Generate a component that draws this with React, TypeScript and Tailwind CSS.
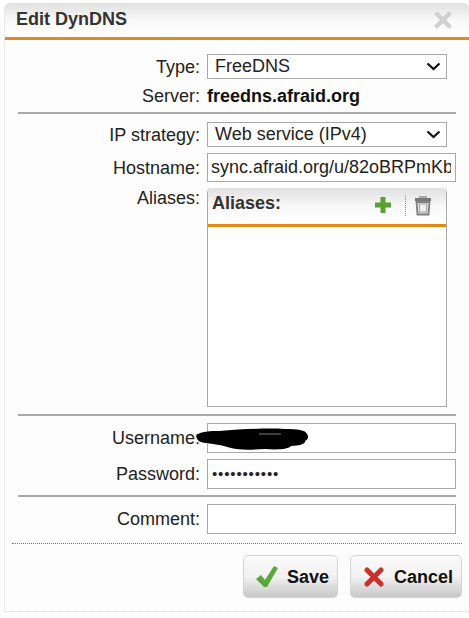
import { ReactNode } from "react";

const font = "font-['Liberation_Sans',Arial,sans-serif]";

function Row({ label, top, children }: { label: ReactNode; top?: boolean; children: ReactNode }) {
  return (
    <div className={`flex ${top ? "items-start" : "items-center"}`}>
      <div className="w-[189px] shrink-0 whitespace-nowrap pr-[7px] text-right text-[18px] leading-[20px] text-[#222]">{label}</div>
      {children}
    </div>
  );
}

function SelectBox({ value }: { value: string }) {
  return (
    <div className="flex h-[25px] w-[240px] items-center justify-between border border-[#a9a9a9] bg-white pl-[7px] pr-[5px] text-[18px] text-[#222]">
      <span>{value}</span>
      <svg width="15" height="9" viewBox="0 0 15 9" fill="none">
        <path d="M1.5 1.5 L7.5 7 L13.5 1.5" stroke="#111" strokeWidth="2.2" />
      </svg>
    </div>
  );
}

function TextBox({ value, className = "h-[30px] pl-[4px]" }: { value?: string; className?: string }) {
  return (
    <div className={`flex w-[249px] items-center border border-[#a9a9a9] bg-white pr-[4px] text-[#222] ${className}`}>
      <span className="min-w-0 overflow-hidden whitespace-nowrap">{value}</span>
    </div>
  );
}

function Divider() {
  return <div className="h-[2px] w-[438px] bg-[#aaaaaa]" />;
}

export default function App() {
  return (
    <div className={`${font} h-[618px] w-[469px] bg-white pl-[4px] pt-[3px]`}>
      <div className="h-[609px] w-[465px] rounded-t-[5px] border-b border-l border-dotted border-[#d8d8d8] bg-[#fdfdfd]">
        {/* title bar */}
        <div className="flex h-[34px] items-center justify-between rounded-t-[5px] bg-gradient-to-b from-[#e0e0e0] via-[#f8f8f8] to-white pl-[11px] pr-[17px]">
          <span className="pb-[2px] text-[18px] font-bold text-[#333]">Edit DynDNS</span>
          <svg width="18" height="18" viewBox="0 0 18 18">
            <path d="M3 3 L15 15 M15 3 L3 15" stroke="#d0d0d0" strokeWidth="4.5" strokeLinecap="round" />
          </svg>
        </div>
        <div className="h-[3px] bg-[#e68a17]" />

        <div className="flex flex-col pl-[13px] pt-[14px]">
          <Row label="Type:">
            <SelectBox value="FreeDNS" />
          </Row>
          <div className="mt-[7px]">
            <Row label="Server:">
              <span className="text-[18px] font-bold leading-[20px] text-[#111]">freedns.afraid.org</span>
            </Row>
          </div>
          <div className="mt-[6px]">
            <Divider />
          </div>
          <div className="mt-[8px]">
            <Row label="IP strategy:">
              <SelectBox value="Web service (IPv4)" />
            </Row>
          </div>
          <div className="mt-[6px]">
            <Row label="Hostname:">
              <TextBox value="sync.afraid.org/u/82oBRPmKb" className="h-[29px] pl-[3px] text-[18px]" />
            </Row>
          </div>
          <div className="mt-[6px]">
            <Row label="Aliases:" top>
              <div className="h-[219px] w-[240px] rounded-t-[5px] border border-t-0 border-[#a9a9a9] bg-white">
                <div className="flex h-[36px] items-center rounded-t-[5px] bg-gradient-to-b from-[#e0e0e0] via-[#f8f8f8] to-white pb-[6px] pl-[4px] pr-[13px]">
                  <span className="text-[18px] font-bold text-[#333]">Aliases:</span>
                  <svg className="ml-auto mt-[4px]" width="18" height="18" viewBox="0 0 18 18">
                    <path d="M9 1 V17 M1 9 H17" stroke="#5aa02c" strokeWidth="5" />
                  </svg>
                  <div className="ml-[13px] mt-[4px] h-[21px] border-l border-dotted border-[#999]" />
                  <svg className="ml-[7px] mt-[5px]" width="20" height="21" viewBox="0 0 20 21" fill="none">
                    <path d="M6 2 H14" stroke="#aaa" strokeWidth="2" />
                    <path d="M2 4.5 H18" stroke="#777" strokeWidth="3" />
                    <path d="M3.5 7 L4.5 19.5 H15.5 L16.5 7 Z" stroke="#808080" strokeWidth="1.8" fill="#dcdcdc" />
                    <rect x="6.5" y="9" width="7" height="8" fill="#efefef" stroke="#a8a8a8" strokeWidth="1" />
                  </svg>
                </div>
                <div className="h-[3px] bg-[#e68a17]" />
              </div>
            </Row>
          </div>
          <div className="mt-[7px]">
            <Divider />
          </div>
          <div className="relative mt-[7px]">
            <Row label="Username:">
              <TextBox />
            </Row>
            {/* scribble over the redacted name */}
            <svg className="absolute left-[177px] top-[4px]" width="118" height="24" viewBox="0 0 118 24">
              <path d="M1 9 C5 4 16 4 24 4 C48 2 72 1 90 2 C102 2 111 3 112 7 C114 10 113 13 110 14 C111 17 104 19 96 19 C94 22 84 23 70 22 C54 23 44 23 36 21 C26 18 18 17 12 16 C6 16 2 14 1 9 Z" fill="#000" />
              <path d="M64 7 H86" stroke="#999" strokeWidth="0.8" />
            </svg>
          </div>
          <div className="mt-[6px]">
            <Row label="Password:">
              <TextBox value="•••••••••••" className="h-[30px] pl-[4px] text-[15px] tracking-[0.85px]" />
            </Row>
          </div>
          <div className="mt-[6px]">
            <Divider />
          </div>
          <div className="mt-[7px]">
            <Row label="Comment:">
              <TextBox />
            </Row>
          </div>
        </div>

        <div className="ml-[7px] mt-[9px] w-[450px] border-t border-dotted border-[#777]" />

        {/* footer buttons */}
        <div className="mr-[7px] mt-[11px] flex justify-end gap-[12px]">
          <button className="flex h-[43px] w-[95px] items-center rounded-[5px] border border-[#d4d4d4] bg-gradient-to-b from-[#fafafa] via-[#f2f2f2] to-[#c8c8c8] pl-[12px]">
            <svg width="22" height="23" viewBox="0 0 22 23">
              <path d="M0 14 L5 10 L9 15 L18 1 L22 3 L11 22 L8 22 Z" fill="#5aa83c" />
            </svg>
            <span className="ml-[9px] pt-[2px] text-[18px] font-bold text-[#111]">Save</span>
          </button>
          <button className="flex h-[43px] w-[112px] items-center rounded-[5px] border border-[#d4d4d4] bg-gradient-to-b from-[#fafafa] via-[#f2f2f2] to-[#c8c8c8] pl-[13px]">
            <svg width="20" height="20" viewBox="0 0 20 20">
              <path d="M3 3 L17 17 M17 3 L3 17" stroke="#c8322a" strokeWidth="5" strokeLinecap="round" />
            </svg>
            <span className="ml-[10px] pt-[2px] text-[18px] font-bold text-[#111]">Cancel</span>
          </button>
        </div>
      </div>
    </div>
  );
}
